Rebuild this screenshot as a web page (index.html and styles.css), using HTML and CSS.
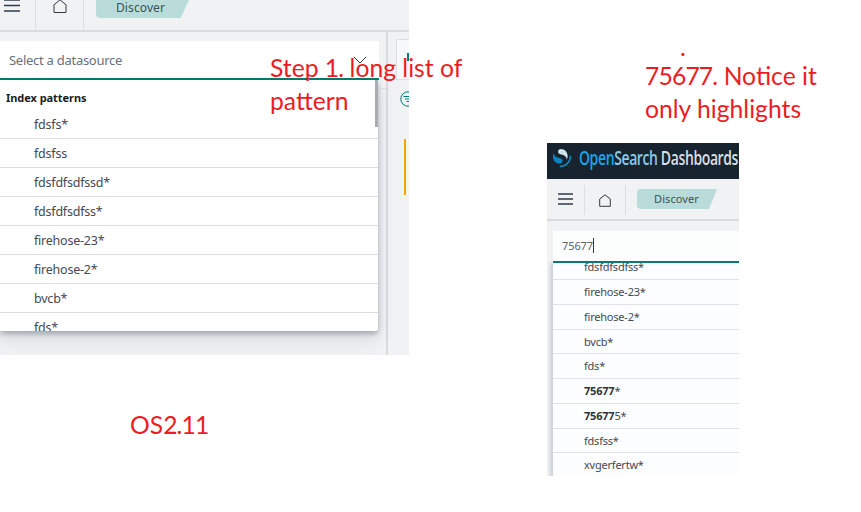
FILE: index.html
```html
<!DOCTYPE html>
<html lang="en">
<head>
<meta charset="utf-8">
<title>OS2.11 datasource list</title>
<link rel="stylesheet" href="styles.css">
</head>
<body>
<section class="shot shot-left">
  <header class="nav nav-left">
    <div class="nav-cell cell-menu">
      <svg class="ic-menu" width="16" height="13" viewBox="0 0 16 13"><path d="M0 1h16M0 6.500h16M0 12h16" stroke="#2f3d4c" stroke-width="1.500" fill="none"/></svg>
    </div>
    <div class="nav-cell cell-home">
      <svg class="ic-home" width="14" height="15" viewBox="0 0 14 15"><path d="M1 13.500V5.800L7 .8l6 5v7.700z" stroke="#343741" stroke-width="1" fill="none"/></svg>
    </div>
    <div class="crumb">Discover</div>
  </header>
  <div class="body-left">
    <div class="combo-col">
      <div class="combo">
        <span class="placeholder">Select a datasource</span>
        <svg class="chev" width="14" height="8" viewBox="0 0 14 8"><path d="M1 1l6 6 6-6" stroke="#343741" stroke-width="1" fill="none"/></svg>
      </div>
      <div class="popup">
        <div class="group-title">Index patterns</div>
        <ul class="list">
          <li class="first">fdsfs*</li>
          <li>fdsfss</li>
          <li>fdsfdfsdfssd*</li>
          <li>fdsfdfsdfss*</li>
          <li>firehose-23*</li>
          <li>firehose-2*</li>
          <li>bvcb*</li>
          <li class="cut">fds*</li>
        </ul>
        <div class="thumb"></div>
      </div>
      <div class="combo-edge"></div>
    </div>
    <div class="side">
      <div class="side-box"><span class="side-mark"></span></div>
      <svg class="ic-filter" width="16" height="16" viewBox="0 0 16 16"><circle cx="8" cy="8" r="7.200" stroke="#017d73" fill="none"/><path d="M3.500 5.500h9M5 8h6M6.500 10.500h3" stroke="#017d73" fill="none"/></svg>
      <div class="callout"></div>
    </div>
  </div>
</section>

<section class="shot shot-right">
  <div class="brand">
    <svg width="18" height="18" viewBox="0 0 64 64"><path d="M61.737 23.500a2.263 2.263 0 0 0-2.262 2.263c0 18.618-15.094 33.712-33.712 33.712a2.263 2.263 0 1 0 0 4.525C46.880 64 64 46.880 64 25.763a2.263 2.263 0 0 0-2.263-2.263Z" fill="#00a3e0"/><path d="M48.081 38c2.176-3.550 4.280-8.282 3.866-14.908C51.090 9.367 38.660-1.045 26.921.084 22.326.526 17.608 4.272 18.027 10.980c.182 2.915 1.609 4.636 3.928 5.959 2.207 1.259 5.043 2.057 8.258 2.961 3.883 1.092 8.388 2.320 11.850 4.871 4.150 3.058 6.987 6.603 6.018 13.229Z" fill="#cfe3ee"/><path d="M3.919 14C1.743 17.550-.361 22.282.052 28.908c.858 13.725 13.288 24.137 25.027 23.008 4.595-.442 9.313-4.188 8.894-10.896-.182-2.915-1.609-4.636-3.928-5.959-2.207-1.259-5.043-2.057-8.258-2.961-3.883-1.092-8.388-2.320-11.850-4.871C5.787 24.171 2.950 20.626 3.919 14Z" fill="#0a84c4"/></svg>
    <span class="brand-name"><span class="b-open">Open</span><span class="b-search">Search</span> <span class="b-dash">Dashboards</span></span>
  </div>
  <header class="nav nav-right">
    <div class="nav-cell r-menu">
      <svg width="15" height="12" viewBox="0 0 15 12"><path d="M0 1h15M0 6h15M0 11h15" stroke="#2f3d4c" stroke-width="1.400" fill="none"/></svg>
    </div>
    <div class="nav-cell r-home">
      <svg width="12" height="13" viewBox="0 0 12 13"><path d="M.7 12.300V5L6 .8 11.300 5v7.300z" stroke="#343741" stroke-width="1" fill="none"/></svg>
    </div>
    <div class="crumb crumb-right">Discover</div>
  </header>
  <div class="body-right">
    <div class="combo combo-right"><span class="typed">75677</span><span class="caret"></span></div>
    <ul class="list list-right">
      <li class="cut-top">fdsfdfsdfss*</li>
      <li>firehose-23*</li>
      <li>firehose-2*</li>
      <li>bvcb*</li>
      <li>fds*</li>
      <li><b>75677</b>*</li>
      <li><b>75677</b>5*</li>
      <li>fdsfss*</li>
      <li>xvgerfertw*</li>
    </ul>
  </div>
</section>

<p class="note note-step">Step <span class="digits">1.</span> long list of<br>pattern</p>
<p class="note note-os">OS<span class="digits">2.11</span></p>
<p class="note note-dot">.</p>
<p class="note note-notice"><span class="digits">75677.</span> Notice it<br>only highlights</p>
</body>
</html>
```

FILE: styles.css
```css
* { box-sizing: border-box; }
html, body { margin: 0; padding: 0; }
body {
  position: relative;
  width: 861px;
  height: 512px;
  overflow: hidden;
  background: #fff;
  font-family: "Noto Sans", "Open Sans", sans-serif;
  color: #343741;
}
.shot { position: absolute; overflow: hidden; background: #f1f2f4; }
.shot-left { left: 0; top: 0; width: 409px; height: 355px; }
.shot-right { left: 547px; top: 143px; width: 192px; height: 333px; }

.nav { display: flex; align-items: stretch; border-bottom: 2px solid #d9dbe0; }
.nav-cell { display: flex; align-items: center; justify-content: center; border-right: 1px solid #dcdee2; }
.nav-left { height: 32px; }
.cell-menu { width: 36px; height: 30px; justify-content: flex-start; align-items: flex-start; }
.ic-menu { flex: none; margin-left: 4px; transform: translateY(-1px); }
.cell-home { width: 48px; height: 30px; align-items: flex-start; }
.ic-home { transform: translateY(-1px); }
.crumb {
  width: 93px;
  height: 18px;
  margin-left: 12px;
  padding: 0 0 3px 20px;
  background: #b9dcdb;
  clip-path: polygon(0 0, 100% 0, 91% 100%, 4px 100%, 1px calc(100% - 1px), 0 calc(100% - 4px));
  font-size: 12px;
  letter-spacing: .1px;
  line-height: 12px;
  display: flex;
  align-items: center;
  color: #3b5156;
}
.body-left { display: flex; height: 323px; }
.combo-col { position: relative; width: 388px; flex: none; border-right: 2px solid #d9dbe0; padding-top: 9px; height: 100%; }
.combo {
  display: flex;
  align-items: center;
  justify-content: space-between;
  background: #fff;
  border-bottom: 2px solid #017d73;
}
.combo-col .combo { width: 379px; height: 39px; padding: 0 12px 0 9px; }
.combo-edge { position: absolute; left: 379px; top: 56px; width: 7px; height: 1px; background: #d9dbe0; }
.placeholder { font-size: 13px; letter-spacing: -.27px; color: #69707d; }
.chev { flex: none; }
.popup {
  position: relative;
  width: 378px;
  height: 251px;
  overflow: hidden;
  background: #fff;
  border-radius: 0 0 3px 0;
  box-shadow: 0 3px 5px rgba(60,70,85,.35), 0 8px 18px rgba(60,70,85,.14);
}
.group-title { height: 32px; padding: 10px 0 0 6px; font-size: 11px; font-weight: 700; letter-spacing: -.05px; line-height: 16px; color: #1a1c21; }
.list { list-style: none; margin: 0; padding: 0; }
.list li {
  height: 29px;
  padding-left: 34px;
  border-bottom: 1px solid #dcdee3;
  font-size: 12.500px;
  letter-spacing: -.22px;
  line-height: 30px;
  color: #444952;
}
.list li.first { height: 27px; line-height: 25px; }
.thumb { position: absolute; top: 0; right: 0; width: 3px; height: 47px; background: #a9adb3; }

.side { position: relative; flex: 1; }
.side-box { position: absolute; left: 8px; top: 7px; width: 20px; height: 41px; border: 1px solid #dcdee3; border-right: 0; background: #f7f8f9; }
.side-mark { position: absolute; left: 10px; top: 13px; width: 2px; height: 8px; background: #017d73; }
.ic-filter { position: absolute; left: 12px; top: 59px; }
.callout { position: absolute; left: 16px; top: 107px; width: 6px; height: 56px; background: #fdf6e8; border-left: 2px solid #f5a700; }

.brand { display: flex; align-items: center; gap: 5px; height: 36px; padding: 0 0 7px 6px; background: #17232f; white-space: nowrap; }
.brand svg { flex: none; }
.brand-name { font-family: "Open Sans", sans-serif; font-size: 19px; font-weight: 600; letter-spacing: -.5px; transform: scaleX(.735); transform-origin: left center; margin-left: 3px; }
.b-open { color: #14a8e8; }
.b-search { color: #8cc9e8; }
.b-dash { color: #d9dfe5; }
.nav-right { height: 42px; padding-top: 2px; }
.nav-right .nav-cell { height: 30px; margin-top: 4px; }
.r-menu { width: 38px; padding-bottom: 2px; }
.r-home { width: 41px; }
.crumb-right { width: 80px; height: 20px; margin: 8px 0 0 11px; padding: 0 0 0 17px; font-size: 11px; clip-path: polygon(0 0, 100% 0, 90% 100%, 3px 100%, 1px calc(100% - 1px), 0 calc(100% - 3px), 0 3px, 1px 1px, 3px 0); }
.body-right { padding: 10px 0 0 6px; }
.combo-right { height: 32px; justify-content: flex-start; padding: 0 0 2px 9px; background: #fcfdfd; }
.typed { font-size: 11px; letter-spacing: -.1px; color: #5a6270; }
.caret { width: 1px; height: 15px; background: #343741; }
.list-right { background: #fcfdfe; box-shadow: -3px 0 3px rgba(100,115,130,.25); }
.list-right li { height: 24.750px; padding-left: 31px; font-size: 11px; letter-spacing: -.22px; line-height: 24px; border-bottom: 1px solid #dfe2e6; }
.list-right li.cut-top { height: 17px; line-height: 8px; }
.list-right b { color: #2f333b; }

.note { position: absolute; margin: 0; font-family: Lato, "Open Sans", sans-serif; color: #ed1c24; font-size: 24.700px; line-height: 33px; white-space: nowrap; }
.digits { letter-spacing: -.85px; }
.note-step { left: 270px; top: 51px; }
.note-os { left: 130px; top: 408px; }
.note-dot { left: 680px; top: 30px; }
.note-notice { left: 645px; top: 59px; }
```
